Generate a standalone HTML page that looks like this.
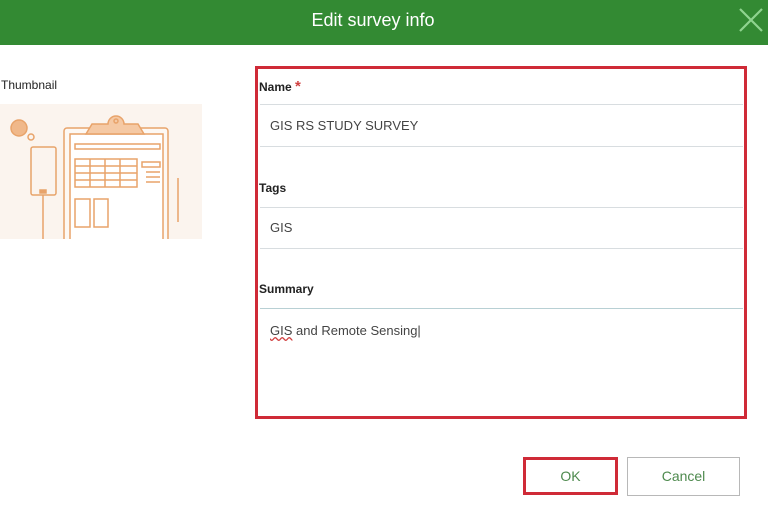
<!DOCTYPE html>
<html><head><style>
*{margin:0;padding:0;box-sizing:border-box}
body{width:768px;height:523px;background:#fff;position:relative;overflow:hidden;font-family:"Liberation Sans",sans-serif;color:#333}
.hdr{position:absolute;left:0;top:0;width:768px;height:45px;background:#338a33}
.hdr .t{position:absolute;left:0;width:746px;top:10px;text-align:center;color:#fff;font-size:18px}
.lbl{position:absolute;font-size:12px;font-weight:bold;color:#222}
.line{position:absolute;left:260px;width:483px;height:1px;background:#d8dde0}
.val{position:absolute;left:270px;font-size:13px;color:#444}
.box{position:absolute;left:255px;top:66px;width:492px;height:353px;border:3px solid #cf2a37}
.btn{position:absolute;font-size:14px;color:#4e8a4e;text-align:center}
</style></head><body>
<div class="hdr"><div class="t">Edit survey info</div>
<svg style="position:absolute;left:738px;top:7px" width="26" height="26"><path d="M2 2L24 24M24 2L2 24" stroke="#8fd48f" stroke-width="2.2"/></svg></div>
<div class="lbl" style="left:1px;top:78px;font-weight:normal;font-size:12px;color:#222">Thumbnail</div>
<svg style="position:absolute;left:0;top:104px" width="202" height="135">
<rect width="202" height="135" fill="#fbf4ee"/>
<g fill="none" stroke="#e8a36a" stroke-width="1.5">
<rect x="64" y="24" width="104" height="116" rx="3" fill="#fdf8f3"/>
<rect x="70" y="30" width="93" height="110" fill="#fff"/>
<path d="M86 30 L92 20 L108 20 A7 7 0 0 1 124 20 L138 20 L144 30 Z" fill="#f5c9a4"/>
<circle cx="116" cy="17" r="2"/>
<rect x="75" y="40" width="85" height="5"/>
<rect x="75" y="55" width="62" height="28"/>
<path d="M75 62H137M75 69H137M75 76H137M90 55V83M105 55V83M120 55V83"/>
<rect x="142" y="58" width="18" height="5"/>
<path d="M146 68H160M146 73H160M146 78H160"/>
<rect x="75" y="95" width="15" height="28"/><rect x="94" y="95" width="14" height="28"/>
<rect x="31" y="43" width="25" height="48" rx="2"/>
<rect x="40" y="86" width="6" height="3" fill="#e8a36a"/>
<path d="M43 91V135"/>
<path d="M178 74V118"/>
<circle cx="19" cy="24" r="8" fill="#f0b88a"/>
<circle cx="31" cy="33" r="3"/>
</g>
</svg>
<div class="box"></div>
<div class="lbl" style="left:259px;top:78px">Name <span style="color:#d04040;font-size:15px">*</span></div>
<div class="line" style="top:104px"></div>
<div class="val" style="top:118px">GIS RS STUDY SURVEY</div>
<div class="line" style="top:146px"></div>
<div class="lbl" style="left:259px;top:181px">Tags</div>
<div class="line" style="top:207px"></div>
<div class="val" style="top:220px">GIS</div>
<div class="line" style="top:248px"></div>
<div class="lbl" style="left:259px;top:282px">Summary</div>
<div class="line" style="top:308px;background:#b8d0d4"></div>
<div class="val" style="top:323px"><span style="text-decoration:underline wavy #d04040">GIS</span> and Remote Sensing|</div>
<div class="btn" style="left:523px;top:457px;width:95px;height:38px;border:3px solid #cf2a37;line-height:32px">OK</div>
<div class="btn" style="left:627px;top:457px;width:113px;height:39px;border:1px solid #b8b8b8;line-height:37px">Cancel</div>
</body></html>
